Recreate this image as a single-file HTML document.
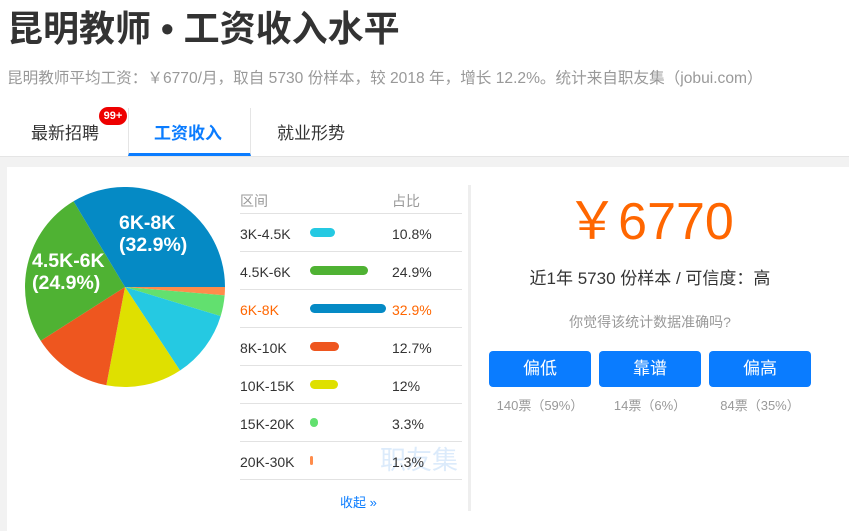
<!DOCTYPE html>
<html><head><meta charset="utf-8"><style>
*{margin:0;padding:0;box-sizing:border-box}
body{width:849px;height:531px;overflow:hidden;background:#fff;font-family:"Liberation Sans","Noto Sans CJK SC",sans-serif;position:relative}
.a{position:absolute;white-space:nowrap}
h1{position:absolute;left:7px;top:6px;font-size:36px;font-weight:bold;color:#333;line-height:46px}
.sub{left:7px;top:66px;font-size:15.6px;color:#999}
.tab{top:119px;font-size:17px;color:#333}
.row{left:240px;width:222px;height:38px;border-bottom:1px solid #e2e2e2;font-size:14px;color:#333}
.row span{position:absolute;top:12px}
.bar{position:absolute;top:14px;height:9px;border-radius:5px;left:70px}
.btn{top:351px;width:102px;height:36px;background:#0a7cff;border-radius:4px;color:#fff;font-size:17px;text-align:center;line-height:36px}
.v{top:395px;width:102px;text-align:center;font-size:13px;color:#999}
</style></head><body>
<h1>昆明教师 • 工资收入水平</h1>
<div class="a sub">昆明教师平均工资：￥6770/月，取自 5730 份样本，较 2018 年，增长 12.2%。统计来自职友集（jobui.com）</div>
<div class="a tab" style="left:31px">最新招聘</div>
<div class="a" style="left:99px;top:107px;width:28px;height:18px;background:#e00;border-radius:9px;color:#fff;font-size:11px;font-weight:bold;text-align:center;line-height:18px">99+</div>
<div class="a" style="left:128px;top:108px;width:123px;height:48px;border-left:1px solid #e5e5e5;border-right:1px solid #e5e5e5;border-bottom:3px solid #0a7cff"></div>
<div class="a tab" style="left:154px;color:#0a7cff;font-weight:bold">工资收入</div>
<div class="a tab" style="left:277px">就业形势</div>
<div class="a" style="left:0;top:156px;width:849px;height:375px;background:#f2f2f2;border-top:1px solid #e5e5e5"></div>
<div class="a" style="left:7px;top:167px;width:842px;height:364px;background:#fff"></div>
<div class="a" style="left:468px;top:185px;width:3px;height:326px;background:#eee"></div>
<svg class="a" style="left:0;top:0" width="260" height="400" id="pie"></svg>
<div class="a" style="left:119px;top:212px;color:#fff;font-weight:bold;font-size:19.5px;line-height:22px">6K-8K<br>(32.9%)</div>
<div class="a" style="left:32px;top:250px;color:#fff;font-weight:bold;font-size:19.5px;line-height:22px">4.5K-6K<br>(24.9%)</div>
<div class="a" style="left:380px;top:440px;font-size:26px;color:#dcebfb">职友集</div>
<div class="a row" style="top:185px;height:29px;color:#999"><span style="top:6px">区间</span><span style="top:6px;left:152px">占比</span></div>
<div id="rows"></div>
<div class="a" style="left:340px;top:492px;font-size:13px;color:#0a7cff">收起 »</div>
<div class="a" style="left:489px;top:191px;width:322px;text-align:center;font-size:52px;color:#ff6600;line-height:62px">￥6770</div>
<div class="a" style="left:489px;top:264px;width:322px;text-align:center;font-size:17px;color:#333">近1年 5730 份样本 / 可信度：高</div>
<div class="a" style="left:489px;top:312px;width:322px;text-align:center;font-size:14px;color:#999">你觉得该统计数据准确吗?</div>
<div class="a btn" style="left:489px">偏低</div><div class="a btn" style="left:599px">靠谱</div><div class="a btn" style="left:709px">偏高</div>
<div class="a v" style="left:489px">140票（59%）</div><div class="a v" style="left:599px">14票（6%）</div><div class="a v" style="left:709px">84票（35%）</div>
<script>
var sl=[[1.3,'#ff8c4b'],[3.3,'#62e06f'],[10.8,'#25c9e2'],[12,'#dfe000'],[12.7,'#ee561f'],[24.9,'#4fb233'],[32.9,'#058ac5']];
var tot=0;sl.forEach(s=>tot+=s[0]);var a=0,cx=125,cy=287,r=100,h='';
sl.forEach(s=>{var b=a+s[0]/tot*2*Math.PI;var x1=cx+r*Math.cos(a),y1=cy+r*Math.sin(a),x2=cx+r*Math.cos(b),y2=cy+r*Math.sin(b);
h+='<path d="M'+cx+','+cy+'L'+x1+','+y1+'A'+r+','+r+' 0 '+(b-a>Math.PI?1:0)+' 1 '+x2+','+y2+'Z" fill="'+s[1]+'"/>';a=b;});
document.getElementById('pie').innerHTML=h;
var rows=[['3K-4.5K','#25c9e2',10.8,'10.8%'],['4.5K-6K','#4fb233',24.9,'24.9%'],['6K-8K','#058ac5',32.9,'32.9%'],['8K-10K','#ee561f',12.7,'12.7%'],['10K-15K','#dfe000',12,'12%'],['15K-20K','#62e06f',3.3,'3.3%'],['20K-30K','#ff8c4b',1.3,'1.3%']];
var o='';rows.forEach((q,i)=>{var w=Math.max(3,q[2]/32.9*76);var c=i==2?'color:#ff6600':'';
o+='<div class="a row" style="top:'+(214+i*38)+'px;'+c+'"><span>'+q[0]+'</span><div class="bar" style="width:'+w+'px;background:'+q[1]+'"></div><span style="left:152px">'+q[3]+'</span></div>';});
document.getElementById('rows').innerHTML=o;
</script>
</body></html>
